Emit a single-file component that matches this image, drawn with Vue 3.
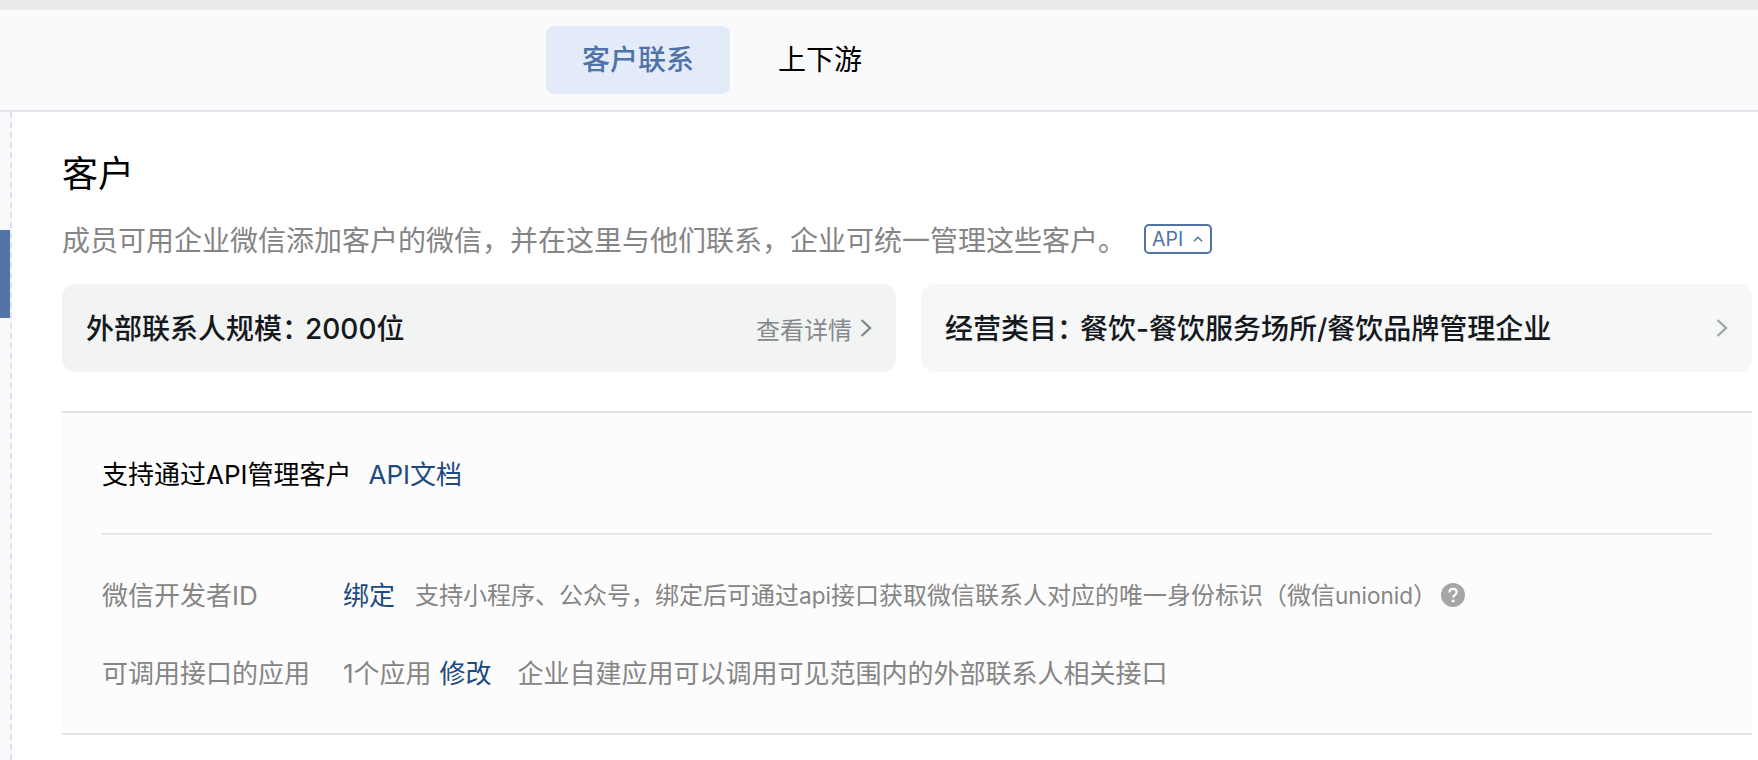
<script setup>
const tabs = [
  { label: '客户联系', active: true },
  { label: '上下游', active: false }
]
</script>

<template>
  <div class="page">
    <div class="topbar"></div>
    <header class="header">
      <div v-for="t in tabs" :key="t.label" class="tab" :class="{ active: t.active }">{{ t.label }}</div>
    </header>
    <div class="body">
      <aside class="rail"><div class="rail-mark"></div></aside>
      <main class="content">
        <h1 class="title">客户</h1>
        <div class="sub">
          <span class="sub-text">成员可用企业微信添加客户的微信，并在这里与他们联系，企业可统一管理这些客户。</span>
          <span class="badge">API
            <svg class="caret" width="10" height="6" viewBox="0 0 10 6"><path d="M1 5.2 5 1.2 9 5.2" fill="none" stroke="#4f73a8" stroke-width="1.5"/></svg>
          </span>
        </div>
        <div class="cards">
          <div class="card one">
            <span class="card-title">外部联系人规模<span class="colon">：</span>2000位</span>
            <span class="more">查看详情
              <svg width="12" height="18" viewBox="0 0 12 18"><path d="M1.5 1 10 9 1.5 17" fill="none" stroke="#85898c" stroke-width="2.4"/></svg>
            </span>
          </div>
          <div class="card two">
            <span class="card-title">经营类目<span class="colon">：</span>餐饮-餐饮服务场所/餐饮品牌管理企业</span>
            <svg width="12" height="18" viewBox="0 0 12 18"><path d="M1.5 1 10 9 1.5 17" fill="none" stroke="#a0a4a8" stroke-width="2.4"/></svg>
          </div>
        </div>
        <section class="api">
          <div class="intro">
            <span>支持通过API管理客户</span>
            <a class="link">API文档</a>
          </div>
          <div class="rows">
            <div class="row">
              <span class="label">微信开发者ID</span>
              <a class="link">绑定</a>
              <span class="desc small gap-a">支持小程序、公众号，绑定后可通过<span class="latin">api</span>接口获取微信联系人对应的唯一身份标识（微信<span class="latin">unionid</span>）</span>
              <svg class="help" width="24" height="24" viewBox="0 0 24 24">
                <circle cx="12" cy="12" r="12" fill="#a6a6a6"/>
                <path d="M8.4 9.4c0-2.2 1.6-3.5 3.7-3.5s3.6 1.3 3.6 3.2c0 1.5-.9 2.3-2 3-1 .7-1.5 1.1-1.5 2.4" fill="none" stroke="#fff" stroke-width="2.2"/>
                <circle cx="12.1" cy="18" r="1.5" fill="#fff"/>
              </svg>
            </div>
            <div class="row">
              <span class="label">可调用接口的应用</span>
              <span class="count">1个应用</span>
              <a class="link gap-b">修改</a>
              <span class="desc gap-c">企业自建应用可以调用可见范围内的外部联系人相关接口</span>
            </div>
          </div>
        </section>
      </main>
    </div>
  </div>
</template>

<style>
html, body { margin: 0; background: #fff; }
</style>

<style scoped>
.page {
  height: 760px;
  overflow: hidden;
  display: flex;
  flex-direction: column;
  background: #fff;
  color: #000;
  font-family: Inter, "Noto Sans CJK SC", sans-serif;
}
.topbar { height: 10px; flex: none; background: #e9eaec; }
.header {
  height: 100px;
  flex: none;
  box-sizing: content-box;
  display: flex;
  align-items: flex-start;
  padding-left: 546px;
  background: #f8fafc;
  border-bottom: 2px solid #e3e5e8;
}
.tab {
  margin-top: 16px;
  height: 68px;
  line-height: 68px;
  padding: 0 36px;
  font-size: 28px;
  border-radius: 8px;
}
.tab.active {
  background: #e4ebf8;
  color: #4f73a8;
  font-weight: 500;
  margin-right: 12px;
}
.body { flex: 1; display: flex; min-height: 0; }
.rail {
  position: relative;
  width: 10px;
  flex: none;
  background: #f8fafc;
  border-right: 2px dashed #dfe2ea;
}
.rail-mark {
  position: absolute;
  left: 0;
  top: 118px;
  width: 10px;
  height: 88px;
  background: #5474a8;
}
.content { flex: 1; min-width: 0; padding: 42px 6px 0 50px; }
.title {
  margin: 0;
  font-size: 36px;
  font-weight: 400;
  line-height: 40px;
}
.sub {
  margin-top: 30px;
  height: 30px;
  display: flex;
  align-items: center;
  gap: 18px;
  font-size: 28px;
  line-height: 30px;
  color: #858585;
  white-space: nowrap;
}
.sub-text { padding-top: 4px; }
.badge {
  box-sizing: border-box;
  width: 68px;
  height: 30px;
  display: flex;
  align-items: center;
  padding-left: 6px;
  gap: 10px;
  border: 2px solid #4f73a8;
  border-radius: 5px;
  font-size: 19.5px;
  color: #4f73a8;
}
.caret { flex: none; }
.cards { margin-top: 30px; display: flex; gap: 25px; }
.card {
  height: 88px;
  display: flex;
  align-items: center;
  justify-content: space-between;
  padding: 0 24px;
  border-radius: 14px;
  box-sizing: border-box;
}
.card.one { width: 834px; flex: none; background: #f2f4f4; }
.card.two { flex: 1; background: #f6f7f7; }
.card-title { font-size: 28px; font-weight: 500; color: #15181c; white-space: nowrap; margin-bottom: 2px; }
.colon { letter-spacing: -5px; }
.more {
  display: flex;
  align-items: center;
  gap: 8px;
  font-size: 24px;
  color: #85898c;
}
.api {
  margin-top: 39px;
  padding: 0 40px;
  background: #fcfcfc;
  border-top: 2px solid #dfe2e6;
  border-bottom: 2px solid #e3e5e8;
}
.intro {
  height: 120px;
  display: flex;
  align-items: center;
  gap: 17px;
  font-size: 26px;
}
.intro > * { margin-bottom: 2px; }
.link { color: #1d4a80; font-size: 26px; }
.rows {
  padding: 40px 0;
  border-top: 2px solid #e3e5e8;
  display: flex;
  flex-direction: column;
  gap: 38px;
}
.row {
  height: 40px;
  display: flex;
  align-items: center;
  color: #858585;
  font-size: 26px;
  white-space: nowrap;
}
.row > span, .row > a { margin-bottom: 4px; }
.label { width: 241px; flex: none; }
.count { font-size: 26px; }
.desc { font-size: 26px; }
.desc.small { font-size: 24px; }
.latin { font-size: 22.5px; }
.gap-a { margin-left: 20px; }
.gap-b { margin-left: 8px; }
.gap-c { margin-left: 26px; }
.help { margin-left: 4px; flex: none; }
</style>
